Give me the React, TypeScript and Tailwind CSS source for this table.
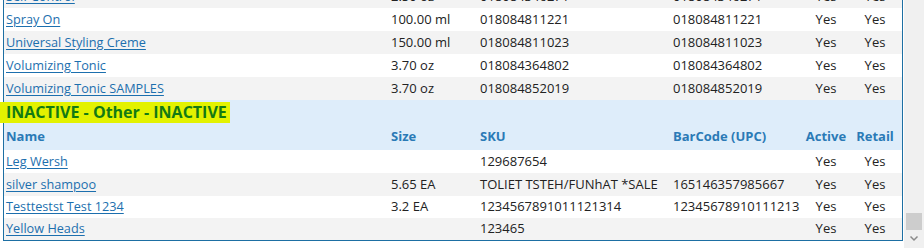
const cols = 'grid grid-cols-[385px_89px_193px_129px_52px_46px]';

type Row = { name: string; size: string; sku: string; upc: string };

const upper: Row[] = [
  { name: 'Self Control', size: '2.50 oz', sku: '018084346271', upc: '018084346271' },
  { name: 'Spray On', size: '100.00 ml', sku: '018084811221', upc: '018084811221' },
  { name: 'Universal Styling Creme', size: '150.00 ml', sku: '018084811023', upc: '018084811023' },
  { name: 'Volumizing Tonic', size: '3.70 oz', sku: '018084364802', upc: '018084364802' },
  { name: 'Volumizing Tonic SAMPLES', size: '3.70 oz', sku: '018084852019', upc: '018084852019' },
];

const inactive: Row[] = [
  { name: 'Leg Wersh', size: '', sku: '129687654', upc: '' },
  { name: 'silver shampoo', size: '5.65 EA', sku: 'TOLIET TSTEH/FUNhAT *SALE', upc: '165146357985667' },
  { name: 'Testtestst Test 1234', size: '3.2 EA', sku: '1234567891011121314', upc: '12345678910111213' },
  { name: 'Yellow Heads', size: '', sku: '123465', upc: '' },
];

function ProductRow({ row, odd, h }: { row: Row; odd: boolean; h: string }) {
  return (
    <div className={`${cols} ${h} items-center ${odd ? 'bg-[#f3f3f3]' : 'bg-white'}`}>
      <div className="pl-[2px]">
        <a href="#" className="text-[#1c6fae] underline underline-offset-2 text-[12.7px]">
          {row.name}
        </a>
      </div>
      <div className="pl-[2px]">{row.size}</div>
      <div className="pl-[2px] whitespace-nowrap">{row.sku}</div>
      <div className="pl-[2px]">{row.upc}</div>
      <div className="text-center">Yes</div>
      <div className="text-center">Yes</div>
    </div>
  );
}

export default function App() {
  return (
    <div
      className="flex w-[924px] h-[248px] overflow-hidden bg-white text-[13px] text-[#222]"
      style={{ fontFamily: '"Open Sans", "Noto Sans", sans-serif' }}
    >
      <div className="w-[904px] h-[248px] overflow-hidden">
        <div className="ml-[3px] w-[900px] border-x border-b border-[#1d6fa3] mt-[-15px]">
          {upper.map((r, i) => (
            <ProductRow key={r.name} row={r} odd={i % 2 === 0} h="h-[23px]" />
          ))}
          <div className="bg-[#deedfa] h-[50px] pt-[2px]">
            <div className="h-[21px] flex items-center">
              <span className="ml-[-4px] pl-[6px] pr-[3px] bg-[#e3f200] text-[#137a14] font-bold text-[16px] leading-[21px]">
                INACTIVE - Other - INACTIVE
              </span>
            </div>
            <div className={`${cols} h-[27px] items-center font-bold text-[#2a7ab6]`}>
              <div className="pl-[2px]">Name</div>
              <div className="pl-[2px]">Size</div>
              <div className="pl-[2px]">SKU</div>
              <div className="pl-[2px]">BarCode (UPC)</div>
              <div className="text-center">Active</div>
              <div className="text-center">Retail</div>
            </div>
          </div>
          {inactive.map((r, i) => (
            <ProductRow key={r.name} row={r} odd={i % 2 === 1} h={i < 2 ? 'h-[23px]' : 'h-[22px]'} />
          ))}
        </div>
      </div>
      <div className="w-[20px] h-[248px] bg-[#f0f0f0] flex flex-col justify-end items-center">
        <div className="w-[16px] h-[17px] bg-[#cdcdcd] mb-[3px]" />
        <svg width="10" height="10" viewBox="0 0 10 10" className="mb-[5px]">
          <path d="M1.5 3.5 L5 7 L8.5 3.5" fill="none" stroke="#8a8a8a" strokeWidth="1.5" />
        </svg>
      </div>
    </div>
  );
}
